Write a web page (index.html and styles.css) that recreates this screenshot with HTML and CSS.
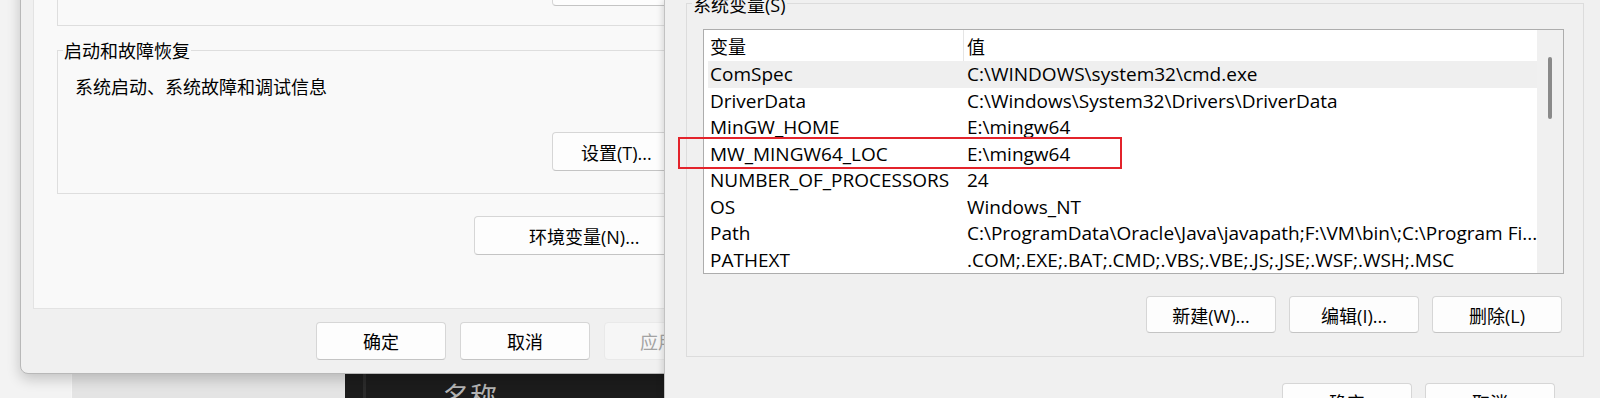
FILE: index.html
```html
<!DOCTYPE html>
<html lang="zh-CN">
<head>
<meta charset="utf-8">
<title>环境变量</title>
<link rel="stylesheet" href="styles.css">
</head>
<body>
<div class="screen">
  <div class="desk">
    <div class="back-window"></div>
    <div class="term">
      <div class="term-pane"><span class="term-title">名称</span></div>
    </div>
    <div class="sysdlg">
      <div class="tabpage">
        <div class="group group-upper">
          <button class="btn btn-upper" aria-label="设置"></button>
        </div>
        <div class="group group-startup">
          <div class="group-label">启动和故障恢复</div>
          <div class="group-desc">系统启动、系统故障和调试信息</div>
          <button class="btn btn-settings">设置(T)...</button>
        </div>
        <button class="btn btn-env">环境变量(N)...</button>
      </div>
      <div class="dlg-buttons">
        <button class="btn btn-dlg">确定</button>
        <button class="btn btn-dlg">取消</button>
        <button class="btn btn-dlg is-disabled">应用(A)</button>
      </div>
    </div>
  </div>
  <div class="envwin">
    <div class="group sysvars">
      <div class="group-label">系统变量(S)</div>
      <div class="varlist">
        <div class="list-main">
          <div class="list-head">
            <div class="hcell hname">变量</div>
            <div class="hcell hvalue">值</div>
          </div>
          <div class="row hot"><div class="cell cname">ComSpec</div><div class="cell cvalue">C:\WINDOWS\system32\cmd.exe</div></div>
          <div class="row"><div class="cell cname">DriverData</div><div class="cell cvalue">C:\Windows\System32\Drivers\DriverData</div></div>
          <div class="row"><div class="cell cname">MinGW_HOME</div><div class="cell cvalue">E:\mingw64</div></div>
          <div class="row"><div class="cell cname">MW_MINGW64_LOC</div><div class="cell cvalue">E:\mingw64</div></div>
          <div class="row"><div class="cell cname">NUMBER_OF_PROCESSORS</div><div class="cell cvalue">24</div></div>
          <div class="row"><div class="cell cname">OS</div><div class="cell cvalue">Windows_NT</div></div>
          <div class="row"><div class="cell cname">Path</div><div class="cell cvalue">C:\ProgramData\Oracle\Java\javapath;F:\VM\bin\;C:\Program Fi...</div></div>
          <div class="row"><div class="cell cname">PATHEXT</div><div class="cell cvalue">.COM;.EXE;.BAT;.CMD;.VBS;.VBE;.JS;.JSE;.WSF;.WSH;.MSC</div></div>
        </div>
        <div class="list-scroll"><div class="thumb"></div></div>
      </div>
      <div class="var-buttons">
        <button class="btn btn-var">新建(W)...</button>
        <button class="btn btn-var">编辑(I)...</button>
        <button class="btn btn-var">删除(L)</button>
      </div>
    </div>
    <div class="win-buttons">
      <button class="btn btn-win">确定</button>
      <button class="btn btn-win">取消</button>
    </div>
    <div class="highlight-box"></div>
  </div>
</div>
</body>
</html>
```

FILE: styles.css
```css
* { box-sizing: border-box; }
html, body { margin: 0; padding: 0; }
body {
  width: 1600px;
  height: 398px;
  overflow: hidden;
  background: #f2f2f2;
  font-family: "Open Sans", "Noto Sans CJK SC", sans-serif;
  font-size: 18px;
  color: #000;
}
.screen { display: flex; width: 1600px; height: 398px; overflow: hidden; }

/* left desktop area */
.desk {
  position: relative;
  flex: none;
  width: 664px;
  height: 398px;
  overflow: hidden;
  background: #f3f3f3;
}
.back-window {
  position: absolute;
  left: 71px;
  top: 360px;
  width: 300px;
  height: 38px;
  background: #e4e4e4;
  border-left: 1px solid #f6f6f6;
}
.term {
  position: absolute;
  left: 345px;
  top: 360px;
  width: 340px;
  height: 38px;
  background: #1c1c1c;
  padding-left: 18px;
  overflow: hidden;
}
.term-pane {
  height: 100%;
  border-left: 3px solid #2b2b2b;
  padding: 21px 0 0 77px;
}
.term-title {
  display: block;
  font-size: 27px;
  line-height: 32px;
  color: #b3b3b3;
}

.sysdlg {
  position: absolute;
  left: 20px;
  top: -30px;
  width: 760px;
  height: 404px;
  border: 1px solid #b8b8b8;
  border-radius: 8px;
  background: #f0f0f0;
  padding-left: 12px;
  box-shadow: 0 5px 14px rgba(0, 0, 0, 0.2);
}
.tabpage {
  height: 338px;
  border: 1px solid #e3e3e3;
  background: #f9f9f9;
  padding-left: 23px;
}
.group { border: 1px solid #dedede; }
.group-upper { height: 54px; border-top: none; }
.group-label {
  width: fit-content;
  margin: -10px 0 0 5px;
  padding: 0 1px;
  line-height: 20px;
  background: #f9f9f9;
}
.group-startup { margin-top: 24px; height: 144px; }
.group-desc { margin: 16px 0 0 17px; line-height: 20px; }

.btn {
  display: flex;
  align-items: center;
  justify-content: center;
  padding: 0;
  font: inherit;
  font-size: 18px;
  color: #000;
  background: #fdfdfd;
  border: 1px solid #d6d6d6;
  border-bottom-color: #c4c4c4;
  border-radius: 4px;
}
.btn-upper { width: 130px; height: 34px; margin-left: 494px; }
.btn-settings { width: 130px; height: 39px; margin: 35px 0 0 494px; justify-content: flex-start; padding-left: 28px; }
.btn-env { width: 200px; height: 39px; margin: 22px 0 0 417px; justify-content: flex-start; padding-left: 54px; }
.dlg-buttons { display: flex; gap: 14px; margin: 13px 0 0 283px; }
.btn-dlg { width: 130px; height: 38px; }
.is-disabled { background: #f6f6f6; border-color: #e9e9e9; color: #a3a3a3; }

/* environment variables window */
.envwin {
  position: relative;
  z-index: 1;
  flex: 1;
  height: 398px;
  overflow: hidden;
  background: #f0f0f0;
  border-left: 1px solid #c2c2c2;
  box-shadow: -2px 0 6px rgba(0, 0, 0, 0.13);
}
.sysvars {
  margin: 3px 0 0 21px;
  width: 898px;
  height: 354px;
  border-color: #dcdcdc;
}
.sysvars .group-label { margin: -9px 0 0 5px; background: #f0f0f0; }
.varlist {
  display: flex;
  margin: 14px 0 0 16px;
  width: 861px;
  height: 245px;
  border: 1px solid #adadad;
  background: #fff;
}
.list-main { flex: 1; overflow: hidden; }
.list-head { display: flex; height: 31px; }
.hcell { height: 31px; padding-top: 4px; line-height: 27px; }
.hname { width: 259px; padding-left: 6px; }
.hvalue { flex: 1; padding-left: 3px; border-left: 1px solid #e5e5e5; }
.row {
  display: flex;
  align-items: center;
  height: 26.5px;
  margin-left: 4px;
  font-size: 19px;
  white-space: nowrap;
}
.row.hot { background: #efefef; }
.cname { width: 255px; flex: none; padding-left: 2px; }
.cvalue { flex: 1; padding-left: 4px; overflow: hidden; }
.list-scroll { width: 26px; flex: none; background: #f0f0f0; padding: 27px 0 0 11px; }
.thumb { width: 4px; height: 62px; border-radius: 2px; background: #8a8a8a; }

.var-buttons {
  display: flex;
  justify-content: flex-end;
  gap: 13px;
  margin-top: 22px;
  padding-right: 21px;
}
.btn-var { width: 130px; height: 37px; }
.win-buttons {
  display: flex;
  justify-content: flex-end;
  gap: 13px;
  margin-top: 26px;
  padding-right: 45px;
}
.btn-win { width: 130px; height: 38px; }

.highlight-box {
  position: absolute;
  left: 13px;
  top: 137px;
  width: 444px;
  height: 32px;
  border: 2px solid #e3232b;
}
```
